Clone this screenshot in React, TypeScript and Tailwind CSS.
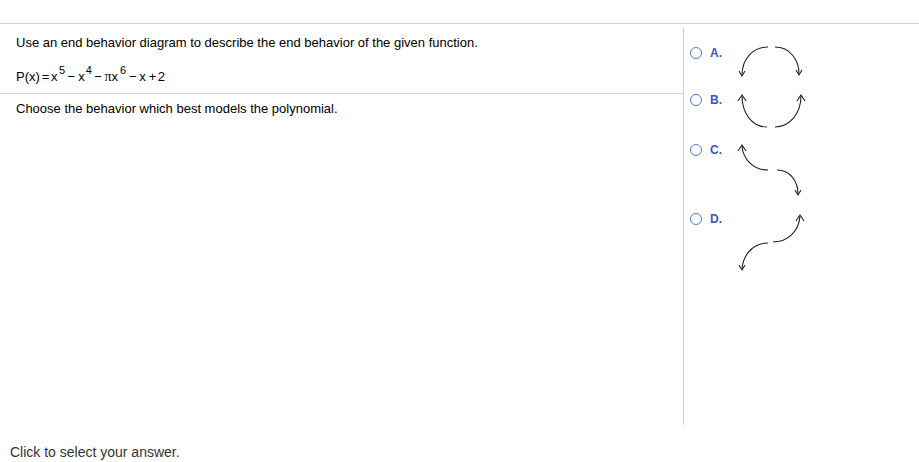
import React from 'react';

const ARROW = 'stroke-[#222] fill-none';

function DiagramA() {
  return (
    <svg width="72" height="36" viewBox="0 0 72 36" className={ARROW} strokeWidth={1.1}>
      <path d="M32,1 C16,1 6,14 6,29" />
      <path d="M3,25 L6,30 L9,25" />
      <path d="M39,1 C54,1 63,14 63,28" />
      <path d="M60,24 L63,29 L66,24" />
    </svg>
  );
}

function DiagramB() {
  return (
    <svg width="72" height="38" viewBox="0 0 72 38" className={ARROW} strokeWidth={1.1}>
      <path d="M31,34 C16,34 6,20 6,3" />
      <path d="M2,8 L6,2 L10,8" />
      <path d="M39,34 C54,34 65,20 65,3" />
      <path d="M61,8 L65,2 L69,8" />
    </svg>
  );
}

function DiagramC() {
  return (
    <svg width="72" height="56" viewBox="0 0 72 56" className={ARROW} strokeWidth={1.1}>
      <path d="M32,27 C17,27 7,16 6,3" />
      <path d="M2,8 L6,2 L10,8" />
      <path d="M41,27 C54,27 62,38 62,51" />
      <path d="M59,47 L62,52 L65,47" />
    </svg>
  );
}

function DiagramD() {
  return (
    <svg width="72" height="62" viewBox="0 0 72 62" className={ARROW} strokeWidth={1.1}>
      <path d="M37,30 C52,30 63,19 64,4" />
      <path d="M60,9 L64,3 L68,9" />
      <path d="M32,31 C17,31 7,43 6,57" />
      <path d="M3,53 L6,58 L9,53" />
    </svg>
  );
}

const OPTIONS = [
  { label: 'A.', h: 'h-[47px]', Diagram: DiagramA },
  { label: 'B.', h: 'h-[50px]', Diagram: DiagramB },
  { label: 'C.', h: 'h-[69px]', Diagram: DiagramC },
  { label: 'D.', h: 'h-[70px]', Diagram: DiagramD },
];

// superscript exponent, lifted just clear of the x-height like the original renderer
const SUP = 'relative -top-[7px] text-[11px] leading-none';

function Formula() {
  return (
    <div className="h-[15px] leading-[15px] whitespace-nowrap">
      <span>P(x)</span>
      <span className="ml-[2px]">=</span>
      <span className="ml-[1.5px]">x</span>
      <span className={`${SUP} ml-[1.5px]`}>5</span>
      <span className="ml-[2.5px]">−</span>
      <span className="ml-[3px]">x</span>
      <span className={`${SUP} ml-[1px]`}>4</span>
      <span className="ml-[2.5px]">−</span>
      <span className="ml-[2.5px] font-['Liberation_Serif',serif] text-[14px]">π</span>
      <span>x</span>
      <span className={`${SUP} ml-[2px]`}>6</span>
      <span className="ml-[3px]">−</span>
      <span className="ml-[2.5px]">x</span>
      <span className="ml-[3px]">+</span>
      <span className="ml-[1.5px]">2</span>
    </div>
  );
}

export default function App() {
  return (
    <div className="w-[919px] h-[462px] bg-white font-['Liberation_Sans',Arial,sans-serif] text-[13px] text-black overflow-hidden">
      <div className="h-[23px]" />
      <div className="h-[421px] border-t border-[#d4d4dc] flex">
        <div className="w-[683px] shrink-0">
          <div className="pl-[16px] pt-[11px] leading-[15px]">
            Use an end behavior diagram to describe the end behavior of the given function.
          </div>
          <div className="pl-[16px] pt-[19px] pb-[9px] border-b border-[#d4d4dc]">
            <Formula />
          </div>
          <div className="pl-[16px] pt-[7px] leading-[15px]">
            Choose the behavior which best models the polynomial.
          </div>
        </div>
        <div className="mt-[4px] h-[397px] border-l border-[#cfcfda] pl-[6px] pt-[18px] flex flex-col">
          {OPTIONS.map(({ label, h, Diagram }) => (
            <div key={label} className={`${h} flex items-start`}>
              <div className="flex items-center h-[14px] w-[46px]">
                <span className="w-[12px] h-[12px] rounded-full border border-[#5576dd] shrink-0" />
                <span className="ml-[8px] text-[12px] font-bold text-[#3b55c8] leading-[14px]">{label}</span>
              </div>
              <Diagram />
            </div>
          ))}
        </div>
      </div>
      <div className="pl-[10px] text-[14px] leading-[16px] text-[#333]">Click to select your answer.</div>
    </div>
  );
}
